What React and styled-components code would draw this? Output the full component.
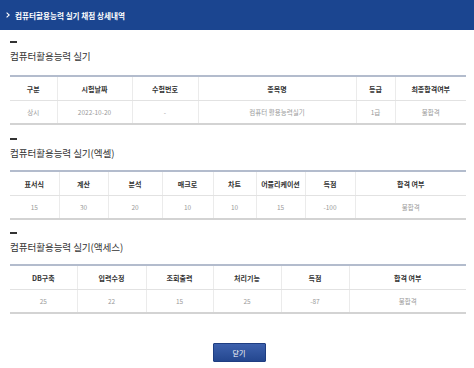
import React from "react";
import styled, { createGlobalStyle } from "styled-components";

const GlobalStyle = createGlobalStyle`
  body {
    margin: 0;
    background: #fff;
    font-family: "Noto Sans CJK KR", "Noto Sans", sans-serif;
  }
`;

// Styled components
const Page = styled.div`
  width: 474px;
  height: 368px;
  overflow: hidden;
  background: #fff;
`;

const TopBar = styled.div`
  height: 30px;
  background: #1b4590;
  display: flex;
  align-items: center;
  gap: 5px;
  padding-left: 6px;
  color: #fff;
  font-size: 7.6px;
  font-weight: 700;
  letter-spacing: 0;
`;

const Content = styled.div`
  padding: 11px 8px 0 10px;
`;

const Section = styled.section`
  margin-bottom: ${(p) => p.$gap}px;
`;

const Dash = styled.div`
  width: 7px;
  height: 2px;
  background: #333;
`;

const SectionTitle = styled.h2`
  margin: 3px 0 0;
  height: 20px;
  line-height: 20px;
  font-size: 9.6px;
  font-weight: 400;
  color: #333;
  letter-spacing: -0.1px;
`;

const Table = styled.table`
  width: 456px;
  margin-top: ${(p) => p.$top}px;
  border-collapse: collapse;
  table-layout: fixed;
  border-top: 2px solid #b3bccd;
  border-bottom: 2px solid #d3d3d3;
`;

const Col = styled.col`
  width: ${(p) => p.$w}px;
`;

const Th = styled.th`
  height: 23px;
  padding: 0;
  font-size: 7px;
  font-weight: 700;
  color: #333;
  text-align: center;
  border-bottom: 1px solid #e2e2e2;
  border-left: 1px solid #ebebeb;
  &:first-child {
    border-left: none;
  }
`;

const Td = styled.td`
  height: 22px;
  padding: 0;
  font-size: 6.5px;
  color: #9a9a9a;
  text-align: center;
  border-left: 1px solid #ebebeb;
  &:first-child {
    border-left: none;
  }
`;

const ButtonRow = styled.div`
  display: flex;
  justify-content: center;
  padding-left: 2px;
`;

const CloseButton = styled.button`
  width: 53px;
  height: 19px;
  border: 1px solid #1f3e82;
  border-radius: 1px;
  background: linear-gradient(#3d61ad, #24478f);
  color: #fff;
  font-family: inherit;
  font-size: 7px;
  padding: 0;
  cursor: pointer;
`;

const Chevron = () => (
  <svg width="4" height="6" viewBox="0 0 4 6">
    <path d="M0.6 0.6 L3.2 3 L0.6 5.4" stroke="#fff" strokeWidth="1.1" fill="none" />
  </svg>
);

const sections = [
  {
    title: "컴퓨터활용능력 실기",
    top: 9,
    gap: 13,
    cols: [
      ["구분", 47],
      ["시험날짜", 75],
      ["수험번호", 66],
      ["종목명", 158],
      ["등급", 39],
      ["최종합격여부", 71],
    ],
    row: ["상시", "2022-10-20", "-", "컴퓨터 활용능력실기", "1급", "불합격"],
  },
  {
    title: "컴퓨터활용능력 실기(엑셀)",
    top: 7,
    gap: 12,
    cols: [
      ["표서식", 49],
      ["계산", 49],
      ["분석", 54],
      ["매크로", 51],
      ["차트", 43],
      ["어플리케이션", 49],
      ["득점", 50],
      ["합격 여부", 111],
    ],
    row: ["15", "30", "20", "10", "10", "15", "-100", "불합격"],
  },
  {
    title: "컴퓨터활용능력 실기(액세스)",
    top: 7,
    gap: 29,
    cols: [
      ["DB구축", 67],
      ["입력수정", 69],
      ["조회출력", 67],
      ["처리기능", 68],
      ["득점", 68],
      ["합격 여부", 117],
    ],
    row: ["25", "22", "15", "25", "-87", "불합격"],
  },
];

const App = () => {
  return (
    <Page>
      <GlobalStyle />
      <TopBar>
        <Chevron />
        <span>컴퓨터활용능력 실기 채점 상세내역</span>
      </TopBar>
      <Content>
        {sections.map((s) => (
          <Section key={s.title} $gap={s.gap}>
            <Dash />
            <SectionTitle>{s.title}</SectionTitle>
            <Table $top={s.top}>
              <colgroup>
                {s.cols.map(([name, w]) => (
                  <Col key={name} $w={w} />
                ))}
              </colgroup>
              <thead>
                <tr>
                  {s.cols.map(([name]) => (
                    <Th key={name}>{name}</Th>
                  ))}
                </tr>
              </thead>
              <tbody>
                <tr>
                  {s.row.map((v, i) => (
                    <Td key={i}>{v}</Td>
                  ))}
                </tr>
              </tbody>
            </Table>
          </Section>
        ))}
        <ButtonRow>
          <CloseButton>닫기</CloseButton>
        </ButtonRow>
      </Content>
    </Page>
  );
};

export default App;
